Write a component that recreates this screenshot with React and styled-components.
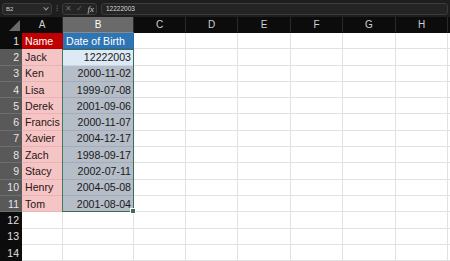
import React from 'react'
import styled, { createGlobalStyle } from 'styled-components'

const GlobalStyle = createGlobalStyle`
  html, body { margin: 0; padding: 0; background: #ffffff; }
  body { font-family: "Liberation Sans", Arial, sans-serif; overflow: hidden; }
`

const COLS = [22, 41, 71, 52, 52, 53, 52, 53, 52, 52]
const ROW_H = 16.3

const people = [
  ['Jack', '12222003'],
  ['Ken', '2000-11-02'],
  ['Lisa', '1999-07-08'],
  ['Derek', '2001-09-06'],
  ['Francis', '2000-11-07'],
  ['Xavier', '2004-12-17'],
  ['Zach', '1998-09-17'],
  ['Stacy', '2002-07-11'],
  ['Henry', '2004-05-08'],
  ['Tom', '2001-08-04'],
]

const Page = styled.div`
  width: 450px;
  height: 261px;
  overflow: hidden;
  background: #ffffff;
`

const FormulaBar = styled.div`
  height: 17px;
  background: #1e1e1e;
  display: flex;
  align-items: center;
  padding: 0 2px;
  gap: 4px;
  box-sizing: border-box;
`

const NameBox = styled.div`
  width: 50px;
  height: 12px;
  border: 1px solid #3c3c3c;
  border-radius: 3px;
  background: #272727;
  color: #cfcfcf;
  font-size: 6px;
  display: flex;
  align-items: center;
  justify-content: space-between;
  padding: 0 3px;
  box-sizing: border-box;
`

const Chevron = styled.span`
  width: 3px;
  height: 3px;
  border-right: 1px solid #a0a0a0;
  border-bottom: 1px solid #a0a0a0;
  transform: rotate(45deg) translate(-1px, -1px);
`

const Grip = styled.span`
  color: #8a8a8a;
  font-size: 8px;
  line-height: 1;
`

const Actions = styled.div`
  width: 35px;
  height: 12px;
  border: 1px solid #3c3c3c;
  border-radius: 3px;
  background: #242424;
  display: flex;
  align-items: center;
  justify-content: space-around;
  box-sizing: border-box;
  color: #6a6a6a;
  font-size: 8px;
`

const Fx = styled.span`
  color: #c8c8c8;
  font-family: "Liberation Serif", serif;
  font-style: italic;
  font-size: 9px;
`

const Input = styled.div`
  flex: 1;
  height: 12px;
  border: 1px solid #3c3c3c;
  border-radius: 3px;
  background: #242424;
  color: #d8d8d8;
  font-size: 6.5px;
  display: flex;
  align-items: center;
  padding: 0 4px;
  box-sizing: border-box;
`

const Sheet = styled.div`
  display: grid;
  grid-template-columns: ${COLS.map(c => c + 'px').join(' ')};
  grid-template-rows: 16px repeat(14, ${ROW_H}px);
  position: relative;
`

const ColHead = styled.div`
  background: ${p => (p.$active ? '#6a6a6a' : '#0c0c0c')};
  color: ${p => (p.$active ? '#ffffff' : '#d0d0d0')};
  font-size: 10px;
  display: flex;
  align-items: center;
  justify-content: center;
  border-right: 1px solid #2a2a2a;
  box-sizing: border-box;
  border-bottom: ${p => (p.$active ? '1px solid #8a8a8a' : '1px solid #0c0c0c')};
`

const Corner = styled.div`
  background: #0c0c0c;
  position: relative;
  &::after {
    content: '';
    position: absolute;
    right: 2px;
    bottom: 2px;
    border-left: 11px solid transparent;
    border-bottom: 11px solid #6a6a6a;
  }
`

const RowHead = styled.div`
  background: ${p => (p.$active ? '#595959' : '#0c0c0c')};
  color: ${p => (p.$active ? '#e6e6e6' : '#e0e0e0')};
  font-size: 10.5px;
  display: flex;
  align-items: center;
  justify-content: flex-end;
  padding-right: 3px;
  box-sizing: border-box;
  border-bottom: 1px solid ${p => (p.$active ? '#6e6e6e' : '#0c0c0c')};
`

const Cell = styled.div`
  background: ${p => p.$bg || '#ffffff'};
  color: ${p => p.$color || '#1a1a1a'};
  font-size: 10.6px;
  display: flex;
  align-items: center;
  justify-content: ${p => (p.$right ? 'flex-end' : 'flex-start')};
  padding: 0 2px 0 3px;
  box-sizing: border-box;
  white-space: nowrap;
  overflow: hidden;
  border-right: 1px solid ${p => p.$line || '#e2e2e2'};
  border-bottom: 1px solid ${p => p.$line || '#e2e2e2'};
`

const Selection = styled.div`
  position: absolute;
  left: 62px;
  top: ${16 + ROW_H}px;
  width: 72px;
  height: ${ROW_H * 10}px;
  border: 1px solid #3f6b55;
  border-left: 1px solid #3f7a5e;
  box-sizing: border-box;
  pointer-events: none;
  &::after {
    content: '';
    position: absolute;
    right: -3px;
    bottom: -3px;
    width: 4px;
    height: 4px;
    background: #3f6b55;
    border: 1px solid #ffffff;
  }
`

const letters = ['A', 'B', 'C', 'D', 'E', 'F', 'G', 'H', '']

export default function App() {
  const rows = []
  for (let r = 1; r <= 14; r++) {
    const active = r >= 2 && r <= 11
    rows.push(<RowHead key={'h' + r} $active={active}>{r}</RowHead>)
    if (r === 1) {
      rows.push(<Cell key="a1" $bg="#c00000" $color="#ffffff" $line="#b00000">Name</Cell>)
      rows.push(<Cell key="b1" $bg="#2e75b6" $color="#ffffff" $line="#2a6aa5">Date of Birth</Cell>)
    } else if (active) {
      const [name, dob] = people[r - 2]
      rows.push(<Cell key={'a' + r} $bg="#f5c4c4" $color="#2a1414" $line="#e9b3b3">{name}</Cell>)
      rows.push(
        <Cell key={'b' + r} $right $bg={r === 2 ? '#dde9f4' : '#b5bdc8'} $line={r === 2 ? '#c9d6e3' : '#a4acb7'}>
          {dob}
        </Cell>
      )
    } else {
      rows.push(<Cell key={'a' + r} />)
      rows.push(<Cell key={'b' + r} />)
    }
    for (let c = 2; c < 9; c++) rows.push(<Cell key={r + '-' + c} />)
  }

  return (
    <Page>
      <GlobalStyle />
      <FormulaBar>
        <NameBox>
          <span>B2</span>
          <Chevron />
        </NameBox>
        <Grip>⁝</Grip>
        <Actions>
          <span>✕</span>
          <span>✓</span>
          <Fx>fx</Fx>
        </Actions>
        <Input>12222003</Input>
      </FormulaBar>
      <Sheet>
        <Corner />
        {letters.map((l, i) => (
          <ColHead key={i} $active={l === 'B'}>{l}</ColHead>
        ))}
        {rows}
        <Selection />
      </Sheet>
    </Page>
  )
}
